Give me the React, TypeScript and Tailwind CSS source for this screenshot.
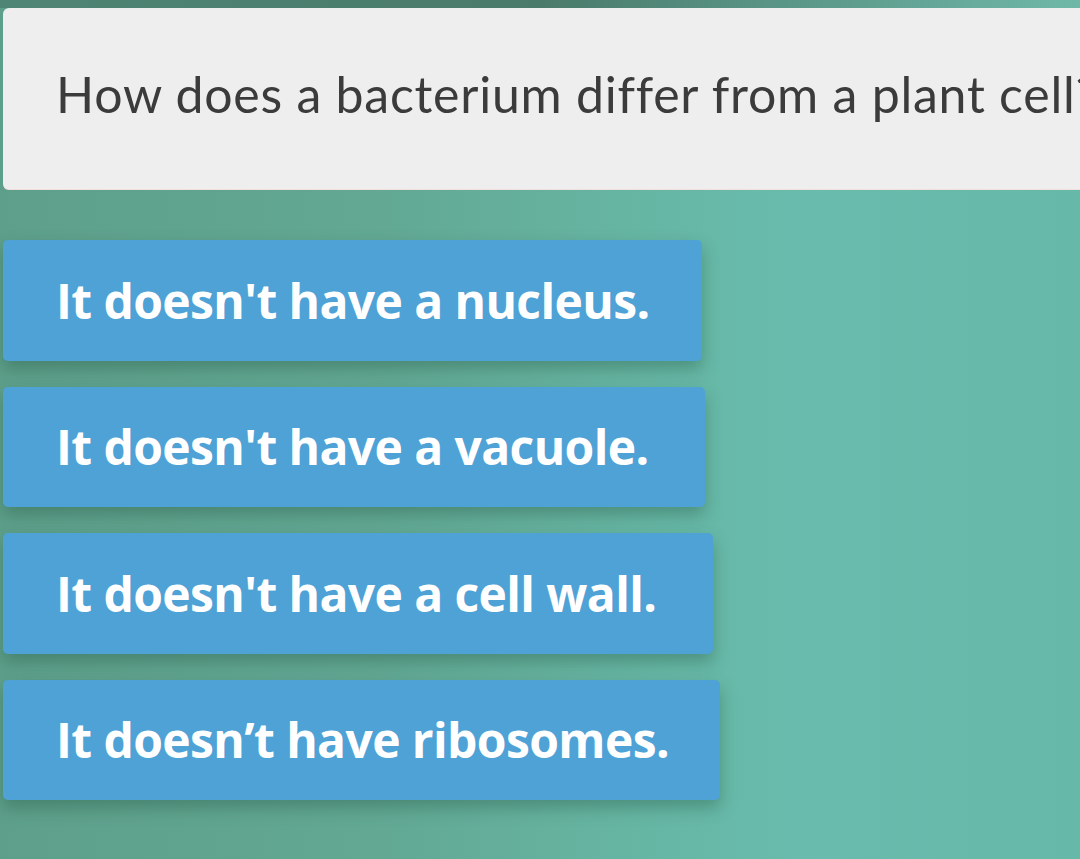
import React from "react";

const answers = [
  { text: "It doesn't have a nucleus.", w: "w-[699px]", h: "h-[121px]" },
  { text: "It doesn't have a vacuole.", w: "w-[702px]", h: "h-[120px]" },
  { text: "It doesn't have a cell wall.", w: "w-[710px]", h: "h-[121px]" },
  { text: "It doesn\u2019t have ribosomes.", w: "w-[717px]", h: "h-[120px]" },
];

export default function App() {
  return (
    <div className="relative w-[1080px] h-[859px] overflow-hidden bg-[linear-gradient(90deg,#5d9f8a_0%,#62a893_35%,#66b6a4_60%,#69bcad_75%,#66b8a8_100%)] font-['Lato','Noto_Sans',sans-serif]">
      <div className="h-[8px] w-full bg-[linear-gradient(90deg,#4f8574_0%,#4a7a6a_50%,#5f9f90_80%,#6fb8a8_100%)]" />
      <div className="pl-[3px]">
        <div className="w-[1100px] h-[182px] bg-[#eeeeee] rounded-l-[6px] flex items-center pl-[53px] overflow-hidden border-b border-[#f3dede]">
          <span className="whitespace-nowrap text-[#3b3b3b] text-[50px] leading-none tracking-[0.75px] pb-[10px]">
            How does a bacterium differ from a plant cell?
          </span>
        </div>
        <div className="mt-[50px] flex flex-col gap-[26px]">
          {answers.map((a) => (
            <div
              key={a.text}
              className={`${a.w} ${a.h} bg-[#4fa2d6] rounded-[5px] flex items-center pl-[53px] shadow-[0_8px_16px_rgba(40,90,70,0.4)]`}
            >
              <span className="whitespace-nowrap text-white font-bold text-[48px] leading-none font-['Open_Sans','Lato',sans-serif] tracking-[-0.6px]">
                {a.text}
              </span>
            </div>
          ))}
        </div>
      </div>
    </div>
  );
}
